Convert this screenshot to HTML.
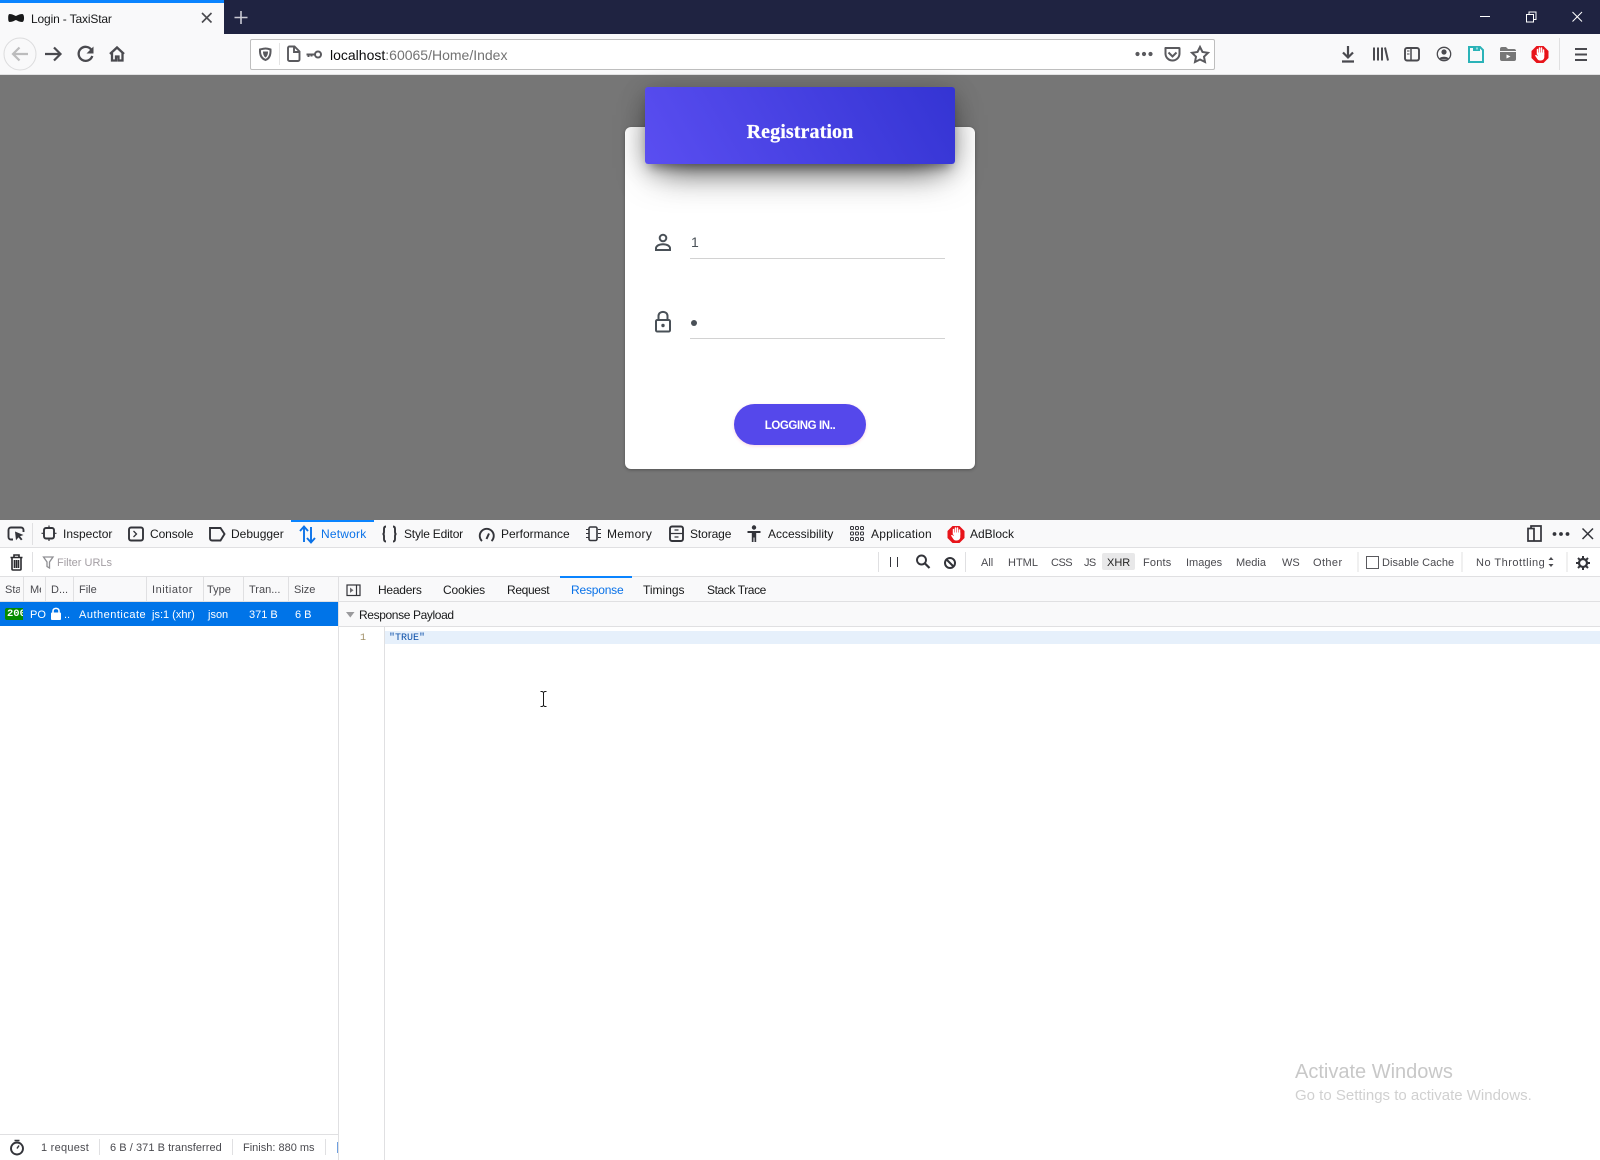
<!DOCTYPE html>
<html><head><meta charset="utf-8"><title>Login - TaxiStar</title>
<style>
html,body{margin:0;padding:0;width:1600px;height:1160px;overflow:hidden;background:#fff;font-family:"Liberation Sans",sans-serif}
.b{position:absolute}
.t{position:absolute;white-space:nowrap;font-size:12px;line-height:16px;color:#18191a}
.g{color:#4a4a4f}
svg{position:absolute;left:0;top:0}
</style></head><body>
<div class="b" style="left:0;top:0;width:1600px;height:34px;background:#1f2341"></div>
<div class="b" style="left:0;top:0;width:224px;height:34px;background:#f9f9fa"></div>
<div class="b" style="left:0;top:0;width:224px;height:3px;background:#0a84ff"></div>
<div class="b" style="left:0;top:34px;width:1600px;height:40px;background:#f9f9fa"></div>
<div class="b" style="left:0;top:74px;width:1600px;height:1px;background:#e1e1e2"></div>
<div class="t" style="left:31px;top:11px;color:#18191a;letter-spacing:-.15px">Login - TaxiStar</div>
<div class="b" style="left:250px;top:39px;width:963px;height:29px;background:#fff;border:1px solid #bebebe;border-radius:2px"></div>
<div class="t" style="left:330px;top:47px;font-size:14px;color:#737373"><span style="color:#0c0c0d">localhost</span>:60065/Home/Index</div>

<div class="b" style="left:0;top:75px;width:1600px;height:445px;background:#767676"></div>
<div class="b" style="left:625px;top:127px;width:350px;height:342px;background:#fff;border-radius:6px;box-shadow:0 1px 3px rgba(0,0,0,.3)"></div>
<div class="b" style="left:645px;top:87px;width:310px;height:77px;border-radius:3px;background:linear-gradient(60deg,#5a4ef1,#3434d3);box-shadow:0 16px 38px -12px rgba(0,0,0,.75),0 4px 25px 0 rgba(0,0,0,.2),0 8px 10px -5px rgba(0,0,0,.35)"></div>
<div class="t" style="left:645px;width:310px;text-align:center;top:120px;font:bold 20px/24px 'Liberation Serif',serif;letter-spacing:.1px;-webkit-text-stroke:.25px #fff;color:#fff">Registration</div>
<div class="t" style="left:691px;top:234px;font-size:14px;color:#495057">1</div>
<div class="b" style="left:690px;top:258px;width:255px;height:1px;background:#d2d2d2"></div>
<div class="b" style="left:691px;top:320px;width:6px;height:6px;border-radius:50%;background:#495057"></div>
<div class="b" style="left:690px;top:338px;width:255px;height:1px;background:#d2d2d2"></div>
<div class="b" style="left:734px;top:404px;width:132px;height:41px;border-radius:21px;background:#5548eb;box-shadow:0 1px 3px rgba(233,30,99,.18)"></div>
<div class="t" style="left:734px;width:132px;text-align:center;top:418px;font-size:11.5px;font-weight:bold;color:#fff;letter-spacing:-.4px">LOGGING IN..</div>

<!-- devtools -->
<div class="b" style="left:0;top:520px;width:1600px;height:27px;background:#f9f9fa"></div>
<div class="b" style="left:0;top:547px;width:1600px;height:1px;background:#e0e0e2"></div>
<div class="b" style="left:0;top:576px;width:1600px;height:1px;background:#e0e0e2"></div>
<div class="b" style="left:0;top:577px;width:1600px;height:24px;background:#f9f9fa"></div>
<div class="b" style="left:0;top:601px;width:1600px;height:1px;background:#e0e0e2"></div>
<div class="b" style="left:339px;top:602px;width:1261px;height:24px;background:#f9f9fa"></div>
<div class="b" style="left:339px;top:626px;width:1261px;height:1px;background:#e0e0e2"></div>
<div class="b" style="left:385px;top:631px;width:1215px;height:13px;background:#e6f0fb"></div>
<div class="b" style="left:338px;top:577px;width:1px;height:583px;background:#e0e0e2"></div>
<div class="b" style="left:384px;top:627px;width:1px;height:533px;background:#e0e0e2"></div>
<div class="b" style="left:291px;top:520px;width:83px;height:2px;background:#0a84ff"></div>
<div class="b" style="left:560px;top:576px;width:72px;height:2px;background:#0a84ff"></div>
<div class="b" style="left:1102px;top:553px;width:33px;height:17px;background:#e8e8e9;border-radius:2px"></div>
<div class="b" style="left:0;top:602px;width:338px;height:24px;background:#0074e8"></div>
<div class="b" style="left:5px;top:608px;width:18px;height:12px;background:#058b00;border-radius:2px 0 0 2px"></div>
<div class="t" style="left:7px;top:606px;font:bold 10.5px/16px 'Liberation Mono',monospace;color:#fff;width:16px;overflow:hidden">200</div>

<div class="t" style="left:63px;top:526px">Inspector</div>
<div class="t" style="left:150px;top:526px;letter-spacing:-.1px">Console</div>
<div class="t" style="left:231px;top:526px">Debugger</div>
<div class="t" style="left:321px;top:526px;color:#0a72e8;letter-spacing:.2px">Network</div>
<div class="t" style="left:404px;top:526px;letter-spacing:-.2px">Style Editor</div>
<div class="t" style="left:501px;top:526px">Performance</div>
<div class="t" style="left:607px;top:526px;letter-spacing:.3px">Memory</div>
<div class="t" style="left:690px;top:526px;letter-spacing:-.1px">Storage</div>
<div class="t" style="left:768px;top:526px">Accessibility</div>
<div class="t" style="left:871px;top:526px;letter-spacing:.2px">Application</div>
<div class="t" style="left:970px;top:526px">AdBlock</div>

<div class="t" style="left:57px;top:555px;font-size:11px;color:#a39ea3">Filter URLs</div>
<div class="t g" style="left:981px;top:555px;font-size:11px">All</div>
<div class="t g" style="left:1008px;top:555px;font-size:11px">HTML</div>
<div class="t g" style="left:1051px;top:555px;font-size:11px;letter-spacing:-.5px">CSS</div>
<div class="t g" style="left:1084px;top:555px;font-size:11px;letter-spacing:-.6px">JS</div>
<div class="t g" style="left:1107px;top:555px;font-size:11px;color:#222">XHR</div>
<div class="t g" style="left:1143px;top:555px;font-size:11px;letter-spacing:.2px">Fonts</div>
<div class="t g" style="left:1186px;top:555px;font-size:11px">Images</div>
<div class="t g" style="left:1236px;top:555px;font-size:11px">Media</div>
<div class="t g" style="left:1282px;top:555px;font-size:11px">WS</div>
<div class="t g" style="left:1313px;top:555px;font-size:11px;letter-spacing:.4px">Other</div>
<div class="t g" style="left:1382px;top:555px;font-size:11px;letter-spacing:.05px">Disable Cache</div>
<div class="t g" style="left:1476px;top:555px;font-size:11px;letter-spacing:.5px">No Throttling</div>

<div class="t g" style="left:5px;top:582px;font-size:11px;width:15px;overflow:hidden">Sta</div>
<div class="t g" style="left:30px;top:582px;font-size:11px;width:11px;overflow:hidden">Me</div>
<div class="t g" style="left:51px;top:582px;font-size:11px">D...</div>
<div class="t g" style="left:79px;top:582px;font-size:11px">File</div>
<div class="t g" style="left:152px;top:582px;font-size:11px;letter-spacing:.55px">Initiator</div>
<div class="t g" style="left:207px;top:582px;font-size:11px">Type</div>
<div class="t g" style="left:249px;top:582px;font-size:11px">Tran...</div>
<div class="t g" style="left:294px;top:582px;font-size:11px">Size</div>
<div class="b" style="left:23px;top:577px;width:1px;height:24px;background:#e0e0e2"></div>
<div class="b" style="left:45px;top:577px;width:1px;height:24px;background:#e0e0e2"></div>
<div class="b" style="left:73px;top:577px;width:1px;height:24px;background:#e0e0e2"></div>
<div class="b" style="left:146px;top:577px;width:1px;height:24px;background:#e0e0e2"></div>
<div class="b" style="left:203px;top:577px;width:1px;height:24px;background:#e0e0e2"></div>
<div class="b" style="left:243px;top:577px;width:1px;height:24px;background:#e0e0e2"></div>
<div class="b" style="left:288px;top:577px;width:1px;height:24px;background:#e0e0e2"></div>

<div class="t" style="left:30px;top:607px;font-size:11px;color:#fff">PO</div>
<div class="t" style="left:64px;top:607px;font-size:11px;color:#fff">..</div>
<div class="t" style="left:79px;top:607px;font-size:11px;color:#fff;letter-spacing:.5px;width:67px;overflow:hidden">Authenticate</div>
<div class="t" style="left:152px;top:607px;font-size:11px;color:#fff">js:1 (xhr)</div>
<div class="t" style="left:208px;top:607px;font-size:11px;color:#fff">json</div>
<div class="t" style="left:249px;top:607px;font-size:11px;color:#fff">371 B</div>
<div class="t" style="left:295px;top:607px;font-size:11px;color:#fff">6 B</div>

<div class="t" style="left:378px;top:582px;letter-spacing:-.25px">Headers</div>
<div class="t" style="left:443px;top:582px;letter-spacing:-.2px">Cookies</div>
<div class="t" style="left:507px;top:582px;letter-spacing:-.35px">Request</div>
<div class="t" style="left:571px;top:582px;color:#0a72e8;letter-spacing:-.2px">Response</div>
<div class="t" style="left:643px;top:582px">Timings</div>
<div class="t" style="left:707px;top:582px;letter-spacing:-.4px">Stack Trace</div>
<div class="t" style="left:359px;top:607px;letter-spacing:-.38px">Response Payload</div>
<div class="t" style="left:360px;top:631px;font:10px/16px 'Liberation Mono',monospace;color:#a08f66">1</div>
<div class="t" style="left:389px;top:631px;font:10px/16px 'Liberation Mono',monospace;color:#0b4fa8">"TRUE"</div>

<div class="b" style="left:0;top:1134px;width:338px;height:1px;background:#e0e0e2"></div>
<div class="t g" style="left:41px;top:1140px;font-size:11px;letter-spacing:.25px">1 request</div>
<div class="b" style="left:99px;top:1139px;width:1px;height:16px;background:#e0e0e2"></div>
<div class="t g" style="left:110px;top:1140px;font-size:11px;letter-spacing:.05px">6 B / 371 B transferred</div>
<div class="b" style="left:232px;top:1139px;width:1px;height:16px;background:#e0e0e2"></div>
<div class="t g" style="left:243px;top:1140px;font-size:11px">Finish: 880 ms</div>
<div class="b" style="left:325px;top:1139px;width:1px;height:16px;background:#e0e0e2"></div>
<div class="b" style="left:337px;top:1142px;width:1px;height:11px;background:#6f9fdf"></div>

<div class="t" style="left:1295px;top:1060px;font-size:20px;line-height:24px;color:#c8c8c8">Activate Windows</div>
<div class="t" style="left:1295px;top:1087px;font-size:15px;line-height:17px;color:#d0d0d0">Go to Settings to activate Windows.</div>

<svg width="1600" height="1160" viewBox="0 0 1600 1160" fill="none">
<!-- tab -->
<path d="M9 14.500c3 0 5 1.500 6.500 2 1.500-.5 3.500-2 6.500-2 1.500 0 2 2 2 4s-.5 4-2 4c-3 0-5-1.500-6.500-2-1.500.5-3.500 2-6.500 2-1.300 0-1.500-2-1.500-4s.2-4 1.500-4z" fill="#18191a" transform="translate(1 -.5) scale(.96 1)"/>
<path d="M202 13l9.500 9.500M211.500 13l-9.500 9.500" stroke="#4a4a4f" stroke-width="1.600"/>
<path d="M241 11v13M234.500 17.500h13" stroke="#c9cad3" stroke-width="1.600"/>
<path d="M1480 16.500h10" stroke="#fff"/>
<path d="M1526.500 14.500h7v7.500h-7zM1529 14.500v-2.500h7v7.500h-2.500" stroke="#fff"/>
<path d="M1572.500 12l9.500 9.500M1582 12l-9.500 9.500" stroke="#fff"/>
<!-- nav -->
<circle cx="20" cy="54" r="16" fill="#f9f9fa" stroke="#dcdcdd"/>
<path d="M28 54H13M19.500 47.500L13 54l6.500 6.500" stroke="#bcbcbd" stroke-width="2.200"/>
<path d="M45 54h15M54 47.500l6.500 6.500-6.500 6.500" stroke="#4a4a4f" stroke-width="2.200"/>
<path d="M91.500 50a7 7 0 1 0 .8 6" stroke="#4a4a4f" stroke-width="2.300"/><path d="M93.500 46.500v7h-7z" fill="#4a4a4f"/>
<path d="M110 54l7-6.500 7 6.500M112 53v7.500h4v-4h2.500v4h4V53" stroke="#4a4a4f" stroke-width="2.300"/>
<!-- url icons -->
<path d="M260 49.500c2-.5 4-1 5.500-1s3.500.5 5 1c.3 5-1 9-5 10.500-4-1.500-5.800-5.500-5.500-10.500z" stroke="#5a5a5e" stroke-width="2"/><path d="M263 51.500h5c0 3-1 5-2.500 6-1.500-1-2.500-3-2.500-6z" fill="#5a5a5e"/>
<path d="M279.500 43v22" stroke="#e4e4e4"/>
<path d="M288 48a1.500 1.500 0 0 1 1.500-1.500h5l5 5v8a1.500 1.500 0 0 1-1.500 1.500h-8.500a1.500 1.500 0 0 1-1.500-1.500zM294 47v5h5" stroke="#5a5a5e" stroke-width="1.900"/>
<circle cx="318" cy="54.500" r="3" stroke="#5a5a5e" stroke-width="2"/><path d="M306.500 54.500h9M308.500 54.500v2.500M311.500 54.500v2" stroke="#5a5a5e" stroke-width="2"/>
<circle cx="1137.500" cy="54" r="2.100" fill="#5a5a5e"/><circle cx="1144" cy="54" r="2.100" fill="#5a5a5e"/><circle cx="1150.500" cy="54" r="2.100" fill="#5a5a5e"/>
<path d="M1165.500 48h13.500a.5.500 0 0 1 .5.500v5a7 7 0 0 1-14 .1v-5a.5.500 0 0 1 0-.6z" stroke="#5a5a5e" stroke-width="2"/><path d="M1168.500 52.500l4 4 4-4" stroke="#5a5a5e" stroke-width="2"/>
<path d="M1200 47l2.500 5 5.500.8-4 3.900 1 5.300-5-2.500-5 2.500 1-5.300-4-3.900 5.500-.8z" stroke="#5a5a5e" stroke-width="2"/>
<!-- toolbar right -->
<path d="M1348 46v11M1343 52.500l5 5 5-5M1342 61.500h12" stroke="#4a4a4f" stroke-width="2.200"/>
<path d="M1374 47.500v13M1378 47.500v13M1382 47.500v13M1385 47.500l3 13" stroke="#4a4a4f" stroke-width="2"/>
<rect x="1405" y="48" width="14" height="12.500" rx="2" stroke="#4a4a4f" stroke-width="1.900"/><path d="M1411 48v12.500" stroke="#4a4a4f" stroke-width="1.500"/><path d="M1407 51h2.500M1407 54h2.500" stroke="#4a4a4f"/>
<circle cx="1444" cy="54" r="6.700" stroke="#4a4a4f" stroke-width="1.300"/><circle cx="1444" cy="52" r="2.600" fill="#4a4a4f"/><path d="M1439.500 58.500c1-2.300 8-2.300 9 0-1.500 1.500-7.500 1.500-9 0z" fill="#4a4a4f"/>
<path d="M1469 47h11l3 3v12h-14z" stroke="#2bb3b8" stroke-width="2"/><path d="M1473 46.500h7v4.500h-7z" fill="#2bb3b8"/><path d="M1477 47.500v2" stroke="#fff"/>
<path d="M1500 49a2 2 0 0 1 2-2h4l2 2h6a2 2 0 0 1 2 2H1500z" fill="#777"/><path d="M1500 52h16v7a2 2 0 0 1-2 2h-12a2 2 0 0 1-2-2z" fill="#777"/><path d="M1506.500 54.500l4 2-4 2z" fill="#fff"/>
<path d="M1536.500 46h7l5 5v7l-5 5h-7l-5-5v-7z" fill="#e8141a"/>
<path d="M1537.500 54v-4.500M1539.500 54v-6M1541.500 54v-6M1543.500 54.500v-4.500" stroke="#fff" stroke-width="1.500" stroke-linecap="round"/>
<path d="M1536.800 52.500h7.500v4.500c0 2-1.500 3.500-3.500 3.500h-1c-1 0-1.800-.5-2.500-1.500l-2.300-3.500 1-.7 1.800 1.500z" fill="#fff"/>
<path d="M1559.500 38v32" stroke="#e0e0e1"/>
<path d="M1575 49h12M1575 54.500h12M1575 60h12" stroke="#4a4a4f" stroke-width="2"/>
<!-- form icons -->
<circle cx="663" cy="238" r="3.300" stroke="#495057" stroke-width="2"/>
<path d="M656 250v-1.500c0-2.500 3-4.300 7-4.300s7 1.800 7 4.300v1.500z" stroke="#495057" stroke-width="2"/>
<rect x="656" y="320" width="14" height="11.500" rx="1.300" stroke="#495057" stroke-width="2"/>
<path d="M658.500 320v-4c0-5.500 9-5.500 9 0v4" stroke="#495057" stroke-width="2"/>
<circle cx="663" cy="325.500" r="1.700" fill="#495057"/>
<!-- devtools row 1 -->
<path d="M13 539.500H11a2.500 2.500 0 0 1-2.500-2.500V530a2.500 2.500 0 0 1 2.500-2.500h10a2.500 2.500 0 0 1 2.500 2.500v2" stroke="#33343a" stroke-width="1.900"/>
<path d="M15 531.500l8.500 3.500-3.500 1.200 2.500 3-1.500 1.200-2.500-3-2.500 2.800z" fill="#33343a"/>
<path d="M32.500 523v22" stroke="#e0e0e2"/>
<rect x="44" y="528" width="10" height="10.500" rx="2" stroke="#33343a" stroke-width="1.900"/><path d="M49 525.500v2.500M49 538.500v2.500M41.500 533.300H44M54 533.300h2.500" stroke="#33343a" stroke-width="1.200"/>
<rect x="129" y="527.500" width="14" height="13" rx="2" stroke="#33343a" stroke-width="1.900"/><path d="M133.500 531l3 3-3 3" stroke="#33343a" stroke-width="1.300"/>
<path d="M210 528h10.500l4 6-4 6.500H212a2 2 0 0 1-2-2z" stroke="#33343a" stroke-width="1.900"/>
<path d="M304 542v-15M300 531l4-4.500 4 4.500M311 527v15M307 538l4 4.500 4-4.500" stroke="#0a72e8" stroke-width="1.900"/>
<path d="M386 526.500c-1.500 0-2 1-2 2.500v3c0 1.300-.5 2-1.500 2 1 0 1.500.7 1.500 2v3c0 1.500.5 2.500 2 2.500M393 526.500c1.500 0 2 1 2 2.500v3c0 1.300.5 2 1.500 2-1 0-1.500.7-1.500 2v3c0 1.500-.5 2.500-2 2.500" stroke="#33343a" stroke-width="1.900"/>
<path d="M482 541a7 7 0 1 1 9.500 0" stroke="#33343a" stroke-width="1.900"/><path d="M486.500 539l2.500-5.500" stroke="#33343a" stroke-width="2"/>
<rect x="589" y="527" width="8" height="13.500" rx="1.500" stroke="#33343a" stroke-width="1.600"/><path d="M586 529.500h2.500M586 533.500h2.500M586 537.500h2.500M598 529.500h3M598 533.500h3M598 537.500h3" stroke="#33343a"/>
<rect x="670" y="526.500" width="13" height="14.500" rx="2" stroke="#33343a" stroke-width="1.900"/><path d="M670 533.500h13M674.500 530h4M674.500 537h4" stroke="#33343a" stroke-width="1.200"/>
<circle cx="754" cy="527.500" r="2.200" fill="#33343a"/><path d="M747.500 531h13v2h-4.300v9h-1.700v-4.500h-1v4.500h-1.700v-9h-4.300z" fill="#33343a"/>
<g stroke="#33343a" stroke-width="1"><rect x="850.500" y="526.500" width="3" height="3" rx="1"/><rect x="855.500" y="526.500" width="3" height="3" rx="1"/><rect x="860.500" y="526.500" width="3" height="3" rx="1"/><rect x="850.500" y="532" width="3" height="3" rx="1"/><rect x="855.500" y="532" width="3" height="3" rx="1"/><rect x="860.500" y="532" width="3" height="3" rx="1"/><rect x="850.500" y="537.500" width="3" height="3" rx="1"/><rect x="855.500" y="537.500" width="3" height="3" rx="1"/><rect x="860.500" y="537.500" width="3" height="3" rx="1"/></g>
<path d="M952.500 526h7l5 5v7l-5 5h-7l-5-5v-7z" fill="#e8141a"/>
<path d="M953.500 534v-4.500M955.500 534v-6M957.500 534v-6M959.500 534.500v-4.500" stroke="#fff" stroke-width="1.500" stroke-linecap="round"/>
<path d="M952.800 532.500h7.500v4.500c0 2-1.500 3.500-3.500 3.500h-1c-1 0-1.800-.5-2.500-1.500l-2.300-3.500 1-.7 1.800 1.500z" fill="#fff"/>
<path d="M1528 528.500h6v12.500h-6zM1531 528.500v-2.500h10v15h-7" stroke="#33343a" stroke-width="1.700"/>
<circle cx="1554.500" cy="534" r="1.900" fill="#33343a"/><circle cx="1561" cy="534" r="1.900" fill="#33343a"/><circle cx="1567.500" cy="534" r="1.900" fill="#33343a"/>
<path d="M1582.500 528.500l10.500 10.500M1593 528.500l-10.500 10.500" stroke="#33343a" stroke-width="1.500"/>
<!-- row 2 -->
<path d="M10.500 557.500h12M14 557v-2h5v2M12 558v11a1 1 0 0 0 1 1h7a1 1 0 0 0 1-1V558M14.500 560v8M16.500 560v8M18.500 560v8" stroke="#2a2a2e" stroke-width="1.600"/>
<path d="M32.500 552v20" stroke="#e0e0e2"/>
<path d="M43.500 557h9.500l-3.500 5v6l-2.500-1.500V562z" stroke="#8f8f93" stroke-width="1.300"/>
<path d="M878.500 552v20M965.500 552v20M1358 552v20M1462 552v20M1567 552v20" stroke="#e0e0e2"/>
<path d="M890.500 557v10M897.500 557v10" stroke="#33343a"/>
<circle cx="921.500" cy="560" r="4.500" stroke="#33343a" stroke-width="1.900"/><path d="M925 563.500l4.500 4.500" stroke="#33343a" stroke-width="2.200"/>
<circle cx="950" cy="563" r="5" stroke="#33343a" stroke-width="2"/><path d="M946.500 559.500l7 7" stroke="#33343a" stroke-width="2"/>
<rect x="1366.500" y="556.500" width="12" height="12" fill="#fff" stroke="#5a5a5e"/>
<path d="M1548.500 560l2.500-3 2.500 3zM1548.500 564l2.500 3 2.500-3z" fill="#4a4a4f"/>
<g transform="translate(0 -1)"><circle cx="1583" cy="564" r="4" stroke="#33343a" stroke-width="2.200"/><path d="M1583 557v2.500M1583 568.500v2.500M1576 564h2.500M1587.500 564h2.500M1578 559l1.800 1.800M1586.200 567.200l1.800 1.800M1588 559l-1.800 1.800M1579.800 567.200l-1.800 1.800" stroke="#33343a" stroke-width="2"/></g>
<!-- row 3 -->
<rect x="347" y="585" width="13" height="10.500" stroke="#33343a" stroke-width="1.200"/><path d="M356.500 585v10.500" stroke="#33343a" stroke-width="1.200"/><path d="M350 587.500l3.500 2.700-3.500 2.700z" fill="#6a6a6e"/>
<!-- lock row -->
<rect x="51" y="612.500" width="10" height="7.500" rx="1" fill="#fff"/><path d="M53 613v-2c0-3.500 6-3.500 6 0v2" stroke="#fff" stroke-width="1.600"/>
<path d="M346 612h8.500l-4.200 5.500z" fill="#9a9a9d"/>
<!-- cursor -->
<path d="M540.500 691.500h1.800l1.200 1 1.200-1h1.800M543.500 692.500v13M540.500 706.500h1.800l1.200-1 1.200 1h1.800" stroke="#1a1a1a" stroke-width="1"/>
<!-- status -->
<circle cx="17" cy="1148.500" r="6" stroke="#33343a" stroke-width="1.900"/><path d="M14.500 1140.500h5M17 1148.500l2-3" stroke="#33343a" stroke-width="1.500"/>
</svg>
</body></html>
